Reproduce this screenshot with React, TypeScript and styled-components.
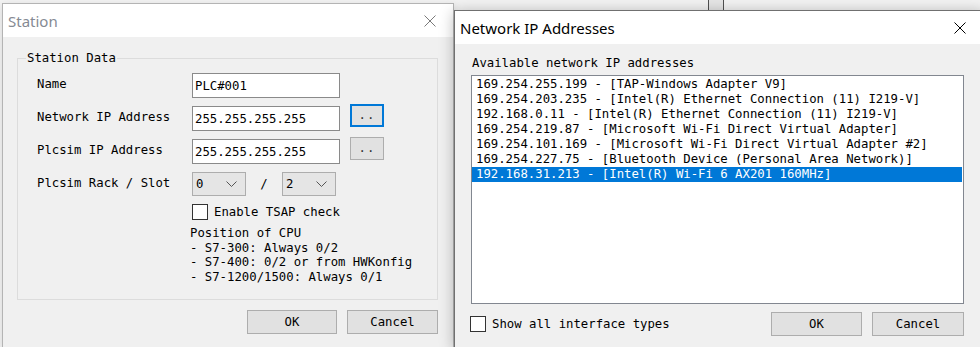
import styled, { createGlobalStyle } from "styled-components";

const MONO = `"DejaVu Sans Mono", "Liberation Mono", monospace`;
const UI = `"Noto Sans", "Open Sans", "Noto Sans CJK SC", sans-serif`;

const GlobalStyle = createGlobalStyle`
  * { box-sizing: border-box; }
  html, body {
    margin: 0;
    padding: 0;
    width: 980px;
    height: 347px;
    overflow: hidden;
    background: #f3f3f3;
  }
`;

const Desktop = styled.div`
  position: relative;
  width: 980px;
  height: 347px;
  overflow: hidden;
  background: #f3f3f3;
  font-family: ${MONO};
  font-size: 12.3px;
  color: #000;
`;

// edge of a window lying behind the dialogs
const BackEdge = styled.div`
  position: absolute;
  left: 708px;
  top: -30px;
  width: 16px;
  height: 45px;
  background: #e6e6e6;
  border-left: 1px solid #505050;
  border-right: 1px solid #505050;
`;

const Window = styled.div<{ $x: number; $y: number; $w: number; $h: number; $active?: boolean }>`
  position: absolute;
  left: ${(p) => p.$x}px;
  top: ${(p) => p.$y}px;
  width: ${(p) => p.$w}px;
  height: ${(p) => p.$h}px;
  display: flex;
  flex-direction: column;
  background: #f0f0f0;
  border: 1px solid ${(p) => (p.$active ? "#707070" : "#b4b4b4")};
  box-shadow: ${(p) =>
    p.$active ? "0 2px 14px rgba(0, 0, 0, 0.28)" : "0 2px 8px rgba(0, 0, 0, 0.12)"};
`;

const TitleBar = styled.div`
  flex: none;
  height: 33px;
  display: flex;
  align-items: center;
  justify-content: space-between;
  background: #fff;
  padding-left: 5px;
`;

const TitleText = styled.span<{ $active?: boolean }>`
  font-family: ${UI};
  font-size: 15px;
  color: ${(p) => (p.$active ? "#000" : "#858a93")};
`;

const CloseBox = styled.div`
  width: 46px;
  height: 33px;
  display: flex;
  align-items: center;
  justify-content: center;
`;

const WindowBody = styled.div<{ $pad: string }>`
  flex: 1;
  display: flex;
  flex-direction: column;
  padding: ${(p) => p.$pad};
`;

const GroupBox = styled.fieldset`
  margin: 14px 0 0 0;
  padding: 7px 0 14px 19px;
  border: 1px solid #dcdcdc;
  min-width: 0;
`;

const GroupLegend = styled.legend`
  margin-left: -11px;
  padding: 0 1px;
  line-height: 15px;
`;

const FieldRow = styled.div<{ $h?: number; $gap?: number }>`
  display: flex;
  align-items: center;
  height: ${(p) => p.$h ?? 25}px;
  margin-bottom: ${(p) => p.$gap ?? 8}px;
`;

const FieldLabel = styled.span`
  flex: none;
  width: 155px;
  padding-bottom: 3px;
`;

const TextInput = styled.div`
  flex: none;
  width: 148px;
  height: 25px;
  display: flex;
  align-items: center;
  padding-left: 2px;
  background: #fff;
  border: 1px solid #8a8a8a;
`;

const DialogButton = styled.div<{ $w: number; $h?: number; $focused?: boolean }>`
  flex: none;
  width: ${(p) => p.$w}px;
  height: ${(p) => p.$h ?? 24}px;
  display: flex;
  align-items: center;
  justify-content: center;
  background: #e1e1e1;
  border: ${(p) => (p.$focused ? "2px solid #0078d7" : "1px solid #adadad")};
`;

const BrowseButton = styled(DialogButton)`
  align-self: flex-start;
  margin: -2px 0 0 10px;
  padding-bottom: 2px;
  letter-spacing: 1px;
  color: #333;
`;

const Combo = styled.div`
  flex: none;
  width: 54px;
  height: 24px;
  display: flex;
  align-items: center;
  justify-content: space-between;
  padding: 0 8px 0 3px;
  background: #e5e5e5;
  border: 1px solid #adadad;
`;

const Slash = styled.span`
  width: 36px;
  text-align: center;
`;

const CheckRow = styled.label<{ $indent?: number }>`
  display: flex;
  align-items: center;
  gap: 6px;
  margin-left: ${(p) => p.$indent ?? 0}px;
`;

const CheckBox = styled.span`
  flex: none;
  width: 16px;
  height: 16px;
  background: #fff;
  border: 1px solid #333;
`;

const NoteBlock = styled.div`
  margin-left: 153px;
  line-height: 14.7px;
  white-space: pre;
`;

const ButtonRow = styled.div<{ $top: number }>`
  display: flex;
  justify-content: flex-end;
  align-items: center;
  gap: 10px;
  margin-top: ${(p) => p.$top}px;
`;

const ListCaption = styled.div`
  margin: 12px 0 0 1px;
  line-height: 15px;
`;

const ListBox = styled.div`
  margin-top: 4px;
  height: 229px;
  padding: 1px 1px 0 0;
  background: #fff;
  border: 1px solid #828790;
  display: flex;
  flex-direction: column;
`;

const ListItem = styled.div<{ $selected?: boolean }>`
  height: 15px;
  line-height: 15px;
  padding-left: 4px;
  white-space: pre;
  background: ${(p) => (p.$selected ? "#0078d7" : "transparent")};
  color: ${(p) => (p.$selected ? "#fff" : "#000")};
`;

const BottomBar = styled.div`
  display: flex;
  align-items: center;
  justify-content: space-between;
  margin-top: 8px;
  height: 24px;
`;

const ButtonGroup = styled.div`
  display: flex;
  gap: 10px;
`;

const CloseIcon = ({ color }: { color: string }) => (
  <svg width="12" height="12" viewBox="0 0 12 12">
    <path d="M0.5 0.5 L11.5 11.5 M11.5 0.5 L0.5 11.5" stroke={color} strokeWidth="1" fill="none" />
  </svg>
);

const Chevron = () => (
  <svg width="11" height="6" viewBox="0 0 11 6">
    <path d="M0.5 0.5 L5.5 5.5 L10.5 0.5" stroke="#555" strokeWidth="1" fill="none" />
  </svg>
);

const addresses = [
  "169.254.255.199 - [TAP-Windows Adapter V9]",
  "169.254.203.235 - [Intel(R) Ethernet Connection (11) I219-V]",
  "192.168.0.11 - [Intel(R) Ethernet Connection (11) I219-V]",
  "169.254.219.87 - [Microsoft Wi-Fi Direct Virtual Adapter]",
  "169.254.101.169 - [Microsoft Wi-Fi Direct Virtual Adapter #2]",
  "169.254.227.75 - [Bluetooth Device (Personal Area Network)]",
  "192.168.31.213 - [Intel(R) Wi-Fi 6 AX201 160MHz]",
];

const selectedIndex = 6;

const App = () => {
  return (
    <Desktop>
      <GlobalStyle />
      <BackEdge />

      <Window $x={2} $y={3} $w={452} $h={346}>
        <TitleBar>
          <TitleText>Station</TitleText>
          <CloseBox>
            <CloseIcon color="#7a7a7a" />
          </CloseBox>
        </TitleBar>
        <WindowBody $pad="0 15px 0 14px">
          <GroupBox>
            <GroupLegend>Station Data</GroupLegend>
            <FieldRow>
              <FieldLabel>Name</FieldLabel>
              <TextInput>PLC#001</TextInput>
            </FieldRow>
            <FieldRow>
              <FieldLabel>Network IP Address</FieldLabel>
              <TextInput>255.255.255.255</TextInput>
              <BrowseButton $w={34} $h={23} $focused>
                ..
              </BrowseButton>
            </FieldRow>
            <FieldRow>
              <FieldLabel>Plcsim IP Address</FieldLabel>
              <TextInput>255.255.255.255</TextInput>
              <BrowseButton $w={34} $h={23}>
                ..
              </BrowseButton>
            </FieldRow>
            <FieldRow $h={24}>
              <FieldLabel>Plcsim Rack / Slot</FieldLabel>
              <Combo>
                <span>0</span>
                <Chevron />
              </Combo>
              <Slash>/</Slash>
              <Combo>
                <span>2</span>
                <Chevron />
              </Combo>
            </FieldRow>
            <FieldRow $h={16} $gap={6}>
              <CheckRow $indent={155}>
                <CheckBox />
                <span>Enable TSAP check</span>
              </CheckRow>
            </FieldRow>
            <NoteBlock>
              {`Position of CPU
- S7-300: Always 0/2
- S7-400: 0/2 or from HWKonfig
- S7-1200/1500: Always 0/1`}
            </NoteBlock>
          </GroupBox>
          <ButtonRow $top={10}>
            <DialogButton $w={90}>OK</DialogButton>
            <DialogButton $w={91}>Cancel</DialogButton>
          </ButtonRow>
        </WindowBody>
      </Window>

      <Window $x={454} $y={10} $w={530} $h={338} $active>
        <TitleBar>
          <TitleText $active>Network IP Addresses</TitleText>
          <CloseBox>
            <CloseIcon color="#000" />
          </CloseBox>
        </TitleBar>
        <WindowBody $pad="0 19px 0 16px">
          <ListCaption>Available network IP addresses</ListCaption>
          <ListBox>
            {addresses.map((a, i) => (
              <ListItem key={a} $selected={i === selectedIndex}>
                {a}
              </ListItem>
            ))}
          </ListBox>
          <BottomBar>
            <CheckRow $indent={-1}>
              <CheckBox />
              <span>Show all interface types</span>
            </CheckRow>
            <ButtonGroup>
              <DialogButton $w={91}>OK</DialogButton>
              <DialogButton $w={92}>Cancel</DialogButton>
            </ButtonGroup>
          </BottomBar>
        </WindowBody>
      </Window>
    </Desktop>
  );
};

export default App;
